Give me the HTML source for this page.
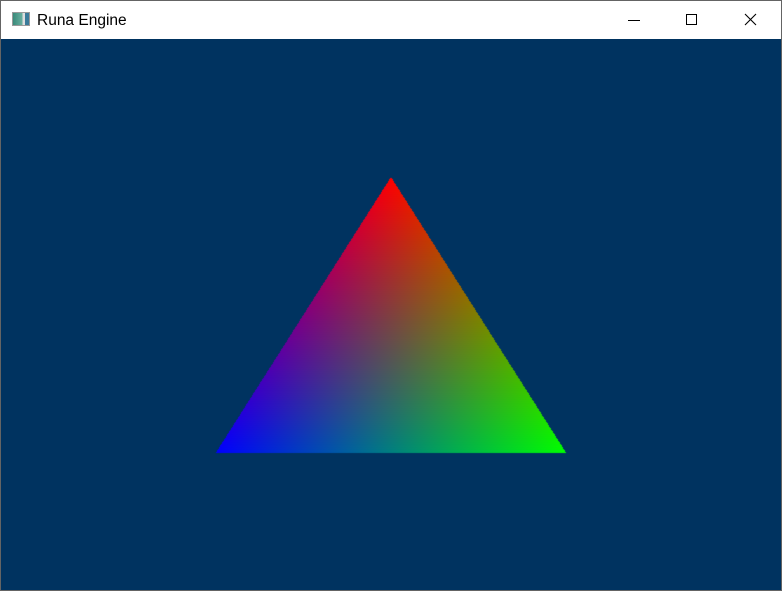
<!DOCTYPE html>
<html><head><meta charset="utf-8"><style>
html,body{margin:0;padding:0;width:782px;height:591px;overflow:hidden;background:#646464}
#win{position:absolute;left:1px;top:1px;width:780px;height:589px;background:#003360}
#tb{position:absolute;left:0;top:0;width:780px;height:38px;background:#fff}
#title{position:absolute;left:36px;top:11px;font:15.5px "Liberation Sans",sans-serif;color:#000}
#ic{position:absolute;left:11px;top:11px;width:16px;height:12px;border:1px solid #999;background:linear-gradient(90deg,#3a8a7a 0,#6ab0a0 60%,#ddd 60%,#ddd 75%,#3a7a9a 75%)}
canvas{position:absolute;left:0;top:0}
</style></head><body>
<div id="win">
<div id="tb"><div id="ic"></div><div id="title">Runa Engine</div>
<svg width="780" height="38" style="position:absolute;left:0;top:0">
<line x1="627" y1="19.5" x2="639" y2="19.5" stroke="#000" stroke-width="1"/>
<rect x="685.5" y="13.5" width="10" height="10" fill="none" stroke="#000" stroke-width="1"/>
<path d="M744 13 L755 24 M755 13 L744 24" stroke="#000" stroke-width="1.1"/>
</svg></div>
</div>
<canvas id="c" width="782" height="591"></canvas>
<script>
var c=document.getElementById('c'),g=c.getContext('2d');
var im=g.createImageData(782,591),d=im.data;
var ax=391,ay=177,bx=216,by=452.5,cx=566,cy=452.5;
var den=(by-cy)*(ax-cx)+(cx-bx)*(ay-cy);
for(var y=170;y<460;y++)for(var x=205;x<580;x++){
var px=x+.5,py=y+.5;
var l1=((by-cy)*(px-cx)+(cx-bx)*(py-cy))/den;
var l2=((cy-ay)*(px-cx)+(ax-cx)*(py-cy))/den;
var l3=1-l1-l2;
if(l1>=0&&l2>=0&&l3>=0){var i=(y*782+x)*4;d[i]=255*l1;d[i+1]=255*l3;d[i+2]=255*l2;d[i+3]=255;}
}
g.putImageData(im,0,0);
</script>
</body></html>
